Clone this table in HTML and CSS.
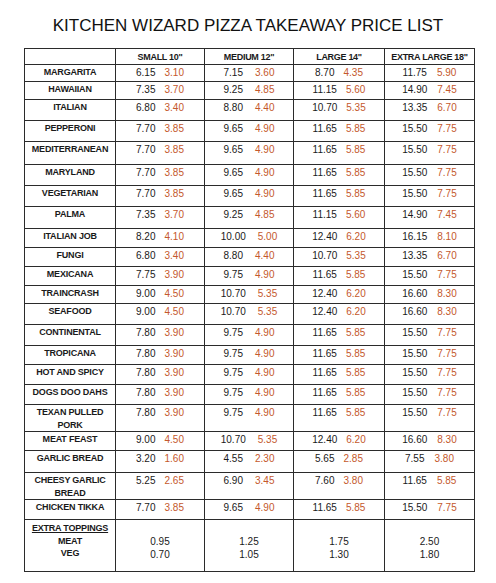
FILE: index.html
```html
<!DOCTYPE html>
<html lang="en">
<head>
  <meta charset="UTF-8">
  <meta name="viewport" content="width=device-width, initial-scale=1.0">
  <title>Kitchen Wizard Pizza Takeaway Price List</title>
  <link rel="stylesheet" href="styles.css">
</head>
<body>
  <h1>KITCHEN WIZARD PIZZA TAKEAWAY PRICE LIST</h1>
  <table class="prices">
    <colgroup>
      <col class="c-name">
      <col class="c-small">
      <col class="c-medium">
      <col class="c-large">
      <col class="c-xl">
    </colgroup>
    <tr class="head h15">
      <th></th>
      <th>SMALL 10"</th>
      <th>MEDIUM 12"</th>
      <th>LARGE 14"</th>
      <th>EXTRA LARGE 18"</th>
    </tr>
    <tr class="h17">
      <td class="name">MARGARITA</td>
      <td><div class="pr"><span>6.15</span><span class="half">3.10</span></div></td>
      <td><div class="pr"><span>7.15</span><span class="half">3.60</span></div></td>
      <td><div class="pr"><span>8.70</span><span class="half">4.35</span></div></td>
      <td><div class="pr"><span>11.75</span><span class="half">5.90</span></div></td>
    </tr>
    <tr class="h18">
      <td class="name">HAWAIIAN</td>
      <td><div class="pr"><span>7.35</span><span class="half">3.70</span></div></td>
      <td><div class="pr"><span>9.25</span><span class="half">4.85</span></div></td>
      <td><div class="pr"><span>11.15</span><span class="half">5.60</span></div></td>
      <td><div class="pr"><span>14.90</span><span class="half">7.45</span></div></td>
    </tr>
    <tr class="h21">
      <td class="name">ITALIAN</td>
      <td><div class="pr"><span>6.80</span><span class="half">3.40</span></div></td>
      <td><div class="pr"><span>8.80</span><span class="half">4.40</span></div></td>
      <td><div class="pr"><span>10.70</span><span class="half">5.35</span></div></td>
      <td><div class="pr"><span>13.35</span><span class="half">6.70</span></div></td>
    </tr>
    <tr class="h21">
      <td class="name">PEPPERONI</td>
      <td><div class="pr"><span>7.70</span><span class="half">3.85</span></div></td>
      <td><div class="pr"><span>9.65</span><span class="half">4.90</span></div></td>
      <td><div class="pr"><span>11.65</span><span class="half">5.85</span></div></td>
      <td><div class="pr"><span>15.50</span><span class="half">7.75</span></div></td>
    </tr>
    <tr class="h23">
      <td class="name">MEDITERRANEAN</td>
      <td><div class="pr"><span>7.70</span><span class="half">3.85</span></div></td>
      <td><div class="pr"><span>9.65</span><span class="half">4.90</span></div></td>
      <td><div class="pr"><span>11.65</span><span class="half">5.85</span></div></td>
      <td><div class="pr"><span>15.50</span><span class="half">7.75</span></div></td>
    </tr>
    <tr class="h21">
      <td class="name">MARYLAND</td>
      <td><div class="pr"><span>7.70</span><span class="half">3.85</span></div></td>
      <td><div class="pr"><span>9.65</span><span class="half">4.90</span></div></td>
      <td><div class="pr"><span>11.65</span><span class="half">5.85</span></div></td>
      <td><div class="pr"><span>15.50</span><span class="half">7.75</span></div></td>
    </tr>
    <tr class="h21">
      <td class="name">VEGETARIAN</td>
      <td><div class="pr"><span>7.70</span><span class="half">3.85</span></div></td>
      <td><div class="pr"><span>9.65</span><span class="half">4.90</span></div></td>
      <td><div class="pr"><span>11.65</span><span class="half">5.85</span></div></td>
      <td><div class="pr"><span>15.50</span><span class="half">7.75</span></div></td>
    </tr>
    <tr class="h22">
      <td class="name">PALMA</td>
      <td><div class="pr"><span>7.35</span><span class="half">3.70</span></div></td>
      <td><div class="pr"><span>9.25</span><span class="half">4.85</span></div></td>
      <td><div class="pr"><span>11.15</span><span class="half">5.60</span></div></td>
      <td><div class="pr"><span>14.90</span><span class="half">7.45</span></div></td>
    </tr>
    <tr class="h19">
      <td class="name">ITALIAN JOB</td>
      <td><div class="pr"><span>8.20</span><span class="half">4.10</span></div></td>
      <td><div class="pr"><span>10.00</span><span class="half">5.00</span></div></td>
      <td><div class="pr"><span>12.40</span><span class="half">6.20</span></div></td>
      <td><div class="pr"><span>16.15</span><span class="half">8.10</span></div></td>
    </tr>
    <tr class="h19">
      <td class="name">FUNGI</td>
      <td><div class="pr"><span>6.80</span><span class="half">3.40</span></div></td>
      <td><div class="pr"><span>8.80</span><span class="half">4.40</span></div></td>
      <td><div class="pr"><span>10.70</span><span class="half">5.35</span></div></td>
      <td><div class="pr"><span>13.35</span><span class="half">6.70</span></div></td>
    </tr>
    <tr class="h19">
      <td class="name">MEXICANA</td>
      <td><div class="pr"><span>7.75</span><span class="half">3.90</span></div></td>
      <td><div class="pr"><span>9.75</span><span class="half">4.90</span></div></td>
      <td><div class="pr"><span>11.65</span><span class="half">5.85</span></div></td>
      <td><div class="pr"><span>15.50</span><span class="half">7.75</span></div></td>
    </tr>
    <tr class="h18">
      <td class="name">TRAINCRASH</td>
      <td><div class="pr"><span>9.00</span><span class="half">4.50</span></div></td>
      <td><div class="pr"><span>10.70</span><span class="half">5.35</span></div></td>
      <td><div class="pr"><span>12.40</span><span class="half">6.20</span></div></td>
      <td><div class="pr"><span>16.60</span><span class="half">8.30</span></div></td>
    </tr>
    <tr class="h21">
      <td class="name">SEAFOOD</td>
      <td><div class="pr"><span>9.00</span><span class="half">4.50</span></div></td>
      <td><div class="pr"><span>10.70</span><span class="half">5.35</span></div></td>
      <td><div class="pr"><span>12.40</span><span class="half">6.20</span></div></td>
      <td><div class="pr"><span>16.60</span><span class="half">8.30</span></div></td>
    </tr>
    <tr class="h21">
      <td class="name">CONTINENTAL</td>
      <td><div class="pr"><span>7.80</span><span class="half">3.90</span></div></td>
      <td><div class="pr"><span>9.75</span><span class="half">4.90</span></div></td>
      <td><div class="pr"><span>11.65</span><span class="half">5.85</span></div></td>
      <td><div class="pr"><span>15.50</span><span class="half">7.75</span></div></td>
    </tr>
    <tr class="h19">
      <td class="name">TROPICANA</td>
      <td><div class="pr"><span>7.80</span><span class="half">3.90</span></div></td>
      <td><div class="pr"><span>9.75</span><span class="half">4.90</span></div></td>
      <td><div class="pr"><span>11.65</span><span class="half">5.85</span></div></td>
      <td><div class="pr"><span>15.50</span><span class="half">7.75</span></div></td>
    </tr>
    <tr class="h20">
      <td class="name">HOT AND SPICY</td>
      <td><div class="pr"><span>7.80</span><span class="half">3.90</span></div></td>
      <td><div class="pr"><span>9.75</span><span class="half">4.90</span></div></td>
      <td><div class="pr"><span>11.65</span><span class="half">5.85</span></div></td>
      <td><div class="pr"><span>15.50</span><span class="half">7.75</span></div></td>
    </tr>
    <tr class="h20">
      <td class="name">DOGS DOO DAHS</td>
      <td><div class="pr"><span>7.80</span><span class="half">3.90</span></div></td>
      <td><div class="pr"><span>9.75</span><span class="half">4.90</span></div></td>
      <td><div class="pr"><span>11.65</span><span class="half">5.85</span></div></td>
      <td><div class="pr"><span>15.50</span><span class="half">7.75</span></div></td>
    </tr>
    <tr class="h24">
      <td class="name">TEXAN PULLED<br>PORK</td>
      <td><div class="pr"><span>7.80</span><span class="half">3.90</span></div></td>
      <td><div class="pr"><span>9.75</span><span class="half">4.90</span></div></td>
      <td><div class="pr"><span>11.65</span><span class="half">5.85</span></div></td>
      <td><div class="pr"><span>15.50</span><span class="half">7.75</span></div></td>
    </tr>
    <tr class="h19">
      <td class="name">MEAT FEAST</td>
      <td><div class="pr"><span>9.00</span><span class="half">4.50</span></div></td>
      <td><div class="pr"><span>10.70</span><span class="half">5.35</span></div></td>
      <td><div class="pr"><span>12.40</span><span class="half">6.20</span></div></td>
      <td><div class="pr"><span>16.60</span><span class="half">8.30</span></div></td>
    </tr>
    <tr class="h22">
      <td class="name">GARLIC BREAD</td>
      <td><div class="pr"><span>3.20</span><span class="half">1.60</span></div></td>
      <td><div class="pr"><span>4.55</span><span class="half">2.30</span></div></td>
      <td><div class="pr"><span>5.65</span><span class="half">2.85</span></div></td>
      <td><div class="pr"><span>7.55</span><span class="half">3.80</span></div></td>
    </tr>
    <tr class="h26">
      <td class="name">CHEESY GARLIC<br>BREAD</td>
      <td><div class="pr"><span>5.25</span><span class="half">2.65</span></div></td>
      <td><div class="pr"><span>6.90</span><span class="half">3.45</span></div></td>
      <td><div class="pr"><span>7.60</span><span class="half">3.80</span></div></td>
      <td><div class="pr"><span>11.65</span><span class="half">5.85</span></div></td>
    </tr>
    <tr class="h20">
      <td class="name">CHICKEN TIKKA</td>
      <td><div class="pr"><span>7.70</span><span class="half">3.85</span></div></td>
      <td><div class="pr"><span>9.65</span><span class="half">4.90</span></div></td>
      <td><div class="pr"><span>11.65</span><span class="half">5.85</span></div></td>
      <td><div class="pr"><span>15.50</span><span class="half">7.75</span></div></td>
    </tr>
    <tr class="extras h52">
      <td class="name"><u>EXTRA TOPPINGS</u><br>MEAT<br>VEG</td>
      <td class="topping">0.95<br>0.70</td>
      <td class="topping">1.25<br>1.05</td>
      <td class="topping">1.75<br>1.30</td>
      <td class="topping">2.50<br>1.80</td>
    </tr>
  </table>
</body>
</html>
```

FILE: styles.css
```css
body {
  margin: 0;
  background: #fff;
  color: #1a1a1a;
  font-family: 'Liberation Sans', Arial, sans-serif;
}
h1 {
  margin: 16px 0 12px;
  font-size: 17px;
  line-height: 20px;
  font-weight: normal;
  text-align: center;
  color: #111;
}

.prices {
  margin-left: 24px;
  border-collapse: collapse;
  table-layout: fixed;
  width: 450px;
}
.c-name { width: 91px; }
.c-small { width: 89px; }
.c-medium { width: 89px; }
.c-large { width: 91px; }
.c-xl { width: 90px; }

.prices th,
.prices td {
  border: 1px solid #2b2b2b;
  padding: 1px 0 0;
  vertical-align: top;
  text-align: center;
  line-height: 13px;
}
.prices th {
  font-size: 9px;
  font-weight: bold;
  letter-spacing: -0.3px;
  padding-top: 2px;
}
.prices td {
  font-size: 10px;
}
.prices td.name {
  font-size: 9px;
  font-weight: bold;
  letter-spacing: -0.2px;
  line-height: 12.5px;
}

.pr {
  display: flex;
  justify-content: center;
  gap: 9px;
}
.prices td:nth-child(3) .pr { gap: 12px; }
.prices td:nth-child(5) .pr { gap: 10px; }
.half {
  color: #c4582c;
}

.extras td.name { padding-top: 2px; }
.topping {
  padding-top: 15px !important;
  line-height: 12.5px;
}

.h15 { height: 15px; }
.h17 { height: 17px; }
.h18 { height: 18px; }
.h19 { height: 19px; }
.h20 { height: 20px; }
.h21 { height: 21px; }
.h22 { height: 22px; }
.h23 { height: 23px; }
.h24 { height: 24px; }
.h26 { height: 26px; }
.h52 { height: 52px; }
```
